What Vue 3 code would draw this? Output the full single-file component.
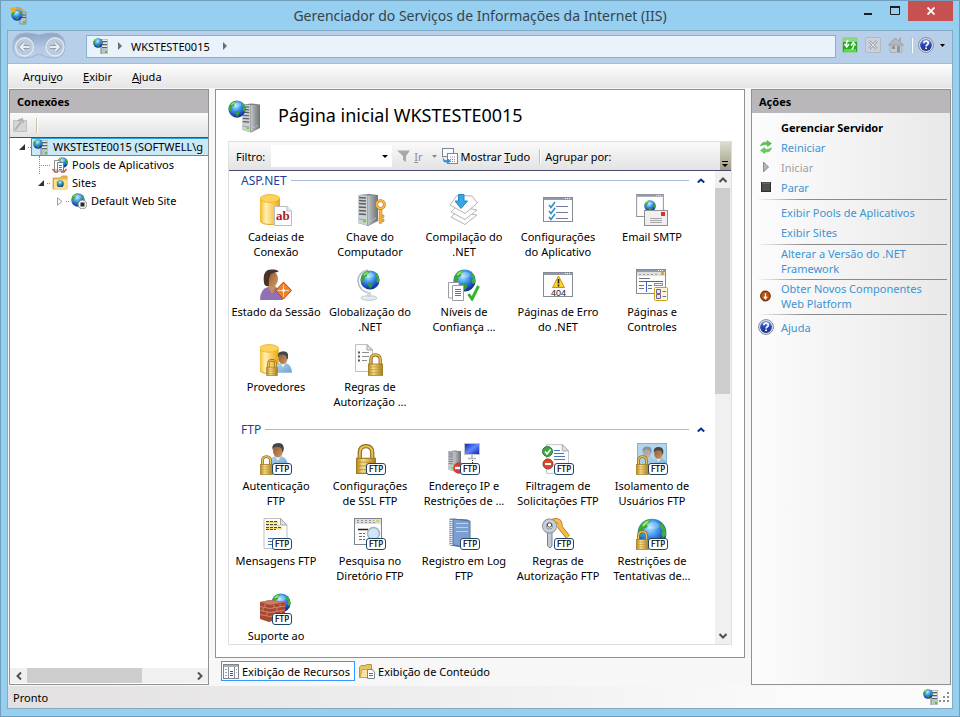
<script setup>
import { ref } from 'vue'

const menus = [
  { before: 'Arqui', key: 'v', after: 'o' },
  { before: '', key: 'E', after: 'xibir' },
  { before: '', key: 'A', after: 'juda' }
]

const tree = [
  { text: 'WKSTESTE0015 (SOFTWELL\\g', icon: 'server-globe', level: 0, state: 'open', selected: true },
  { text: 'Pools de Aplicativos', icon: 'pools', level: 1, state: 'leaf' },
  { text: 'Sites', icon: 'sites', level: 1, state: 'open' },
  { text: 'Default Web Site', icon: 'website', level: 2, state: 'closed' }
]

const groups = [
  {
    name: 'ASP.NET',
    items: [
      { lines: ['Cadeias de', 'Conexão'], icon: 'connection' },
      { lines: ['Chave do', 'Computador'], icon: 'machine-key' },
      { lines: ['Compilação do', '.NET'], icon: 'compile' },
      { lines: ['Configurações', 'do Aplicativo'], icon: 'app-settings' },
      { lines: ['Email SMTP'], icon: 'smtp' },
      { lines: ['Estado da Sessão'], icon: 'session' },
      { lines: ['Globalização do', '.NET'], icon: 'globalization' },
      { lines: ['Níveis de', 'Confiança ...'], icon: 'trust' },
      { lines: ['Páginas de Erro', 'do .NET'], icon: 'error-pages' },
      { lines: ['Páginas e', 'Controles'], icon: 'pages' },
      { lines: ['Provedores'], icon: 'providers' },
      { lines: ['Regras de', 'Autorização ...'], icon: 'rules' }
    ]
  },
  {
    name: 'FTP',
    items: [
      { lines: ['Autenticação', 'FTP'], icon: 'ftp-auth', ftp: true },
      { lines: ['Configurações', 'de SSL FTP'], icon: 'ftp-ssl', ftp: true },
      { lines: ['Endereço IP e', 'Restrições de ...'], icon: 'ftp-ip', ftp: true },
      { lines: ['Filtragem de', 'Solicitações FTP'], icon: 'ftp-filter', ftp: true },
      { lines: ['Isolamento de', 'Usuários FTP'], icon: 'ftp-isolation', ftp: true },
      { lines: ['Mensagens FTP'], icon: 'ftp-messages', ftp: true },
      { lines: ['Pesquisa no', 'Diretório FTP'], icon: 'ftp-browse', ftp: true },
      { lines: ['Registro em Log', 'FTP'], icon: 'ftp-log', ftp: true },
      { lines: ['Regras de', 'Autorização FTP'], icon: 'ftp-rules', ftp: true },
      { lines: ['Restrições de', 'Tentativas de...'], icon: 'ftp-attempts', ftp: true },
      { lines: ['Suporte ao'], icon: 'ftp-firewall', ftp: true }
    ]
  }
]

const actions = [
  {
    items: [
      { lines: ['Reiniciar'], icon: 'restart' },
      { lines: ['Iniciar'], icon: 'play', disabled: true },
      { lines: ['Parar'], icon: 'stop' }
    ]
  },
  { spaced: true, items: [{ lines: ['Exibir Pools de Aplicativos'] }, { lines: ['Exibir Sites'] }] },
  { items: [{ lines: ['Alterar a Versão do .NET', 'Framework'] }] },
  { items: [{ lines: ['Obter Novos Componentes', 'Web Platform'], icon: 'webpi' }] },
  { spaced: true, items: [{ lines: ['Ajuda'], icon: 'help' }] }
]

const filter = ref('')
const view = ref('features')
</script>

<template>
  <svg class="sprite" width="0" height="0" aria-hidden="true">
    <defs>
      <radialGradient id="gSea" cx="0.42" cy="0.32" r="0.72">
        <stop offset="0" stop-color="#b4e8ff" /><stop offset="0.4" stop-color="#4298ee" /><stop offset="0.75" stop-color="#1a4cc0" /><stop offset="1" stop-color="#0b2370" />
      </radialGradient>
      <linearGradient id="gGold" x1="0" x2="1" y1="0" y2="0">
        <stop offset="0" stop-color="#f5b81f" /><stop offset="0.3" stop-color="#fff0b5" /><stop offset="1" stop-color="#eda606" />
      </linearGradient>
      <linearGradient id="gLock" x1="0" x2="1" y1="0" y2="0">
        <stop offset="0" stop-color="#b98a1f" /><stop offset="0.35" stop-color="#f7df8d" /><stop offset="1" stop-color="#a8791a" />
      </linearGradient>
      <linearGradient id="gSteel" x1="0" x2="1" y1="0" y2="0">
        <stop offset="0" stop-color="#c6cacc" /><stop offset="0.4" stop-color="#9da2a5" /><stop offset="1" stop-color="#6d7275" />
      </linearGradient>
      <linearGradient id="gSkin" x1="0" x2="1" y1="0" y2="1">
        <stop offset="0" stop-color="#8a5530" /><stop offset="1" stop-color="#d29b67" />
      </linearGradient>
      <linearGradient id="gShirt" x1="0" x2="1" y1="0" y2="1">
        <stop offset="0" stop-color="#b9d7ef" /><stop offset="1" stop-color="#6da2d0" />
      </linearGradient>
      <linearGradient id="gScreen" x1="0" x2="1" y1="0" y2="1">
        <stop offset="0" stop-color="#0a22a8" /><stop offset="0.5" stop-color="#5f86ff" /><stop offset="1" stop-color="#0a1cb0" />
      </linearGradient>
      <linearGradient id="gHelp" x1="0" x2="0" y1="0" y2="1">
        <stop offset="0" stop-color="#6d8fe8" /><stop offset="0.5" stop-color="#2545b8" /><stop offset="1" stop-color="#1a2f90" />
      </linearGradient>
      <linearGradient id="gFade" x1="0" x2="0" y1="0" y2="1">
        <stop offset="0" stop-color="#8ba5c5" /><stop offset="0.6" stop-color="#b3c8e2" /><stop offset="1" stop-color="#bdd1ea" />
      </linearGradient>

      <!-- shared shapes, each drawn in its own box -->
      <symbol id="globe" viewBox="0 0 24 24">
        <circle cx="12" cy="12" r="11.5" fill="url(#gSea)" />
        <path d="M1.5 8 Q4 2 10 1 L11 3 L8 5 L8.5 7 L5 9 L6 11 L3.5 13 L4 16 Q0 13 1.5 8Z" fill="#3aa832" />
        <path d="M4 5.5 Q7 2 10 2 L8 4.5 L5 7Z" fill="#9be876" />
        <path d="M18.5 4 L20.5 5 Q24 10 23 14 L21 16 L19.5 13 L20.5 10 L18 7Z" fill="#3fb034" />
        <path d="M9 15 L14 15.5 L15 18 L12.5 22.5 L10.5 19Z" fill="#35a02c" />
        <ellipse cx="13" cy="6" rx="5" ry="3" fill="#fff" opacity="0.22" />
      </symbol>
      <symbol id="tower" viewBox="0 0 20 32">
        <path d="M0 1 L11 0 L20 1 L20 27 L10 32 L0 29Z" fill="#7c8184" />
        <path d="M0 1 L9 1.5 L9 31.5 L0 29Z" fill="#ccd0d2" />
        <path d="M9.5 1.5 L20 1.5 L20 26.5 L9.5 31.5Z" fill="url(#gSteel)" />
        <path d="M1 3.5 L8 4 M1 6.5 L8 7 M1 9.5 L8 10 M1 13 L8 13.5 M1 16.5 L8 17 M1 20 L8 20.5" stroke="#5b6063" stroke-width="1.3" />
        <path d="M1 25 L8 26" stroke="#9ba0a3" />
        <path d="M12 27 L18 24" stroke="#d9dcde" stroke-dasharray="1 1" />
        <rect x="5" y="26" width="3" height="2.5" fill="#6fdc2f" />
      </symbol>
      <symbol id="cylinder" viewBox="0 0 20 31">
        <path d="M0 4 V27 Q2 31 10 31 Q18 31 20 27 V4Z" fill="url(#gGold)" />
        <path d="M0.5 27 Q2 30.5 10 30.5 Q18 30.5 19.5 27" fill="none" stroke="#e09a0c" stroke-width="0.8" />
        <ellipse cx="10" cy="4.5" rx="9.7" ry="4" fill="#fbd25a" stroke="#eaa820" stroke-width="0.7" />
      </symbol>
      <symbol id="lock" viewBox="0 0 16 24">
        <path d="M3 13 V7 Q3 1.7 8 1.7 Q13 1.7 13 7 V13" fill="none" stroke="#8c6a1c" stroke-width="3.4" />
        <path d="M3 13 V7 Q3 1.7 8 1.7 Q13 1.7 13 7 V13" fill="none" stroke="#e8c35c" stroke-width="1.6" />
        <rect x="0.5" y="11.5" width="15" height="12" fill="url(#gLock)" stroke="#a67d22" />
        <path d="M1 14.5 H15 M1 17.5 H15 M1 20.5 H15" stroke="#b98f30" stroke-width="0.7" />
      </symbol>
      <symbol id="man" viewBox="0 0 20 24">
        <path d="M1 24 Q0 15 7 13 H13 Q20 15 20 24Z" fill="url(#gShirt)" />
        <path d="M7 13 L10 18 L13 13Z" fill="#eef5fb" />
        <ellipse cx="10" cy="8" rx="5" ry="6.5" fill="url(#gSkin)" />
        <path d="M4.5 7 Q3 0 10.5 0 Q17 0 15.5 8 L14 9 Q14.5 4 10 4 Q6 3 4.5 7Z" fill="#43474a" />
      </symbol>
      <symbol id="page" viewBox="0 0 24 31">
        <path d="M0.5 0.5 H17 L23.5 7 V30.5 H0.5Z" fill="#fcfcfc" stroke="#bfc2c4" />
        <path d="M17 0.5 V7 H23.5Z" fill="#dfe2e4" stroke="#a4a8ab" />
      </symbol>
      <symbol id="frame" viewBox="0 0 30 25">
        <rect x="0.5" y="0.5" width="29" height="24" fill="#fdfdfe" stroke="#868c93" />
        <rect x="1" y="1" width="28" height="2" fill="#8d9bae" />
        <path d="M22 1.5 H28" stroke="#fff" stroke-dasharray="1 1" />
      </symbol>
      <symbol id="key" viewBox="0 0 11 25">
        <path d="M4 9 H7 V24 L5.5 25 L4 24Z M7 16 H9 V18.5 H7 M7 20 H9 V22.5 H7" fill="#f6b23c" stroke="#c07a10" stroke-width="0.5" />
        <circle cx="5.5" cy="5.5" r="3.9" fill="#fff" stroke="#b0700c" stroke-width="2.8" />
        <circle cx="5.5" cy="5.5" r="3.9" fill="none" stroke="#fbb94a" stroke-width="1.8" />
      </symbol>

      <!-- small icons -->
      <symbol id="i-server-globe" viewBox="0 0 16 16">
        <rect x="8" y="1" width="7" height="15" fill="#b9c2c9" />
        <rect x="7.5" y="1" width="1" height="15" fill="#7d868c" />
        <path d="M9 3.5 H14 M9 6.5 H14 M9 9.5 H14" stroke="#596065" />
        <path d="M9 2.5 H14 M9 5.5 H14 M9 8.5 H14" stroke="#f4f6f8" stroke-width="0.8" />
        <rect x="12" y="13" width="2" height="2" fill="#45d11f" />
        <use href="#globe" x="0" y="0" width="10" height="10" />
      </symbol>
      <symbol id="i-pools" viewBox="0 0 16 16">
        <use href="#globe" x="5" y="0" width="11" height="11" />
        <path d="M2.5 3.5 H8 V13 H2.5Z" fill="#fff" stroke="#8b9095" />
        <path d="M5.5 5.5 H11.5 V14 H5.5Z" fill="#fff" stroke="#6f7a85" />
        <path d="M7 8.5 H10 M7 10.5 H10 M7 12.5 H10" stroke="#4a7db5" />
        <path d="M0.5 12 L3 15 H6 M14.5 12 L12 15 H9" fill="none" stroke="#cf4a3e" stroke-width="1.4" />
      </symbol>
      <symbol id="i-sites" viewBox="0 0 16 16">
        <path d="M1 3 H8 L10 1 H15 V14 H1Z" fill="#e6b84f" stroke="#c69a3a" stroke-width="0.8" />
        <rect x="2" y="4.5" width="13" height="9.5" fill="#fbdf8a" />
        <use href="#globe" x="4.5" y="5" width="7.5" height="7.5" />
      </symbol>
      <symbol id="i-website" viewBox="0 0 16 16">
        <use href="#globe" x="0" y="0" width="14" height="14" />
        <circle cx="11.5" cy="11.5" r="4.4" fill="#f4f4f4" stroke="#73777a" stroke-width="0.8" />
        <rect x="9.5" y="9.5" width="4" height="4" fill="#26282a" />
      </symbol>
      <symbol id="i-restart" viewBox="0 0 12 14">
        <path d="M0.5 6 Q2 1 7 2.5 L7 0.5 L11.5 3.5 L7.5 6.5 L7.2 4.8 Q3.5 4 0.5 6Z" fill="#54c548" stroke="#3faa38" stroke-width="0.5" />
        <path d="M11.5 8 Q10 13 5 11.5 L5 13.5 L0.5 10.5 L4.5 7.5 L4.8 9.2 Q8.5 10 11.5 8Z" fill="#62d055" stroke="#3faa38" stroke-width="0.5" />
      </symbol>
      <symbol id="i-play" viewBox="0 0 12 14">
        <path d="M3.5 2 L8.5 7 L3.5 12Z" fill="#b4b4b4" stroke="#8b8b8b" />
      </symbol>
      <symbol id="i-stop" viewBox="0 0 12 14">
        <rect x="1.5" y="2.5" width="9" height="9" fill="#4f4f4f" stroke="#2e2e2e" />
        <path d="M2 3 H10" stroke="#7a7a7a" />
      </symbol>
      <symbol id="i-webpi" viewBox="0 0 13 13">
        <rect width="13" height="13" fill="#fafafa" />
        <circle cx="6" cy="6.5" r="4.5" fill="#b8561a" stroke="#6d2e0c" />
        <path d="M6 4 V8 M4.5 7 L6 9 L7.5 7" fill="none" stroke="#fff" stroke-width="1.1" />
      </symbol>
      <symbol id="i-help" viewBox="0 0 16 16">
        <circle cx="8" cy="8" r="7.4" fill="#e3e5ea" stroke="#85888f" />
        <circle cx="8" cy="8" r="5.9" fill="url(#gHelp)" />
        <path d="M5.8 6.3 Q5.8 4.2 8 4.2 Q10.3 4.2 10.3 6.1 Q10.3 7.2 9 7.9 Q8.1 8.4 8.1 9.4" fill="none" stroke="#fff" stroke-width="1.7" />
        <rect x="7.2" y="10.5" width="1.8" height="1.6" fill="#fff" />
      </symbol>

      <!-- feature icons -->
      <symbol id="i-connection" viewBox="0 0 32 32">
        <use href="#cylinder" x="0" y="0" width="20" height="31" />
        <path d="M14.5 12.5 H27 L31.5 17 V31.5 H14.5Z" fill="#fff" stroke="#b9bbbd" />
        <path d="M27 12.5 V17 H31.5" fill="#e8e8e8" stroke="#b9bbbd" />
        <text x="16" y="26" font-family="Liberation Serif, serif" font-weight="700" font-size="13" fill="#a8201c">ab</text>
      </symbol>
      <symbol id="i-machine-key" viewBox="0 0 32 32">
        <use href="#tower" x="4" y="0" width="20" height="32" />
        <use href="#key" x="21" y="5" width="11" height="25" />
      </symbol>
      <symbol id="i-compile" viewBox="0 0 32 32">
        <g fill="#fdfdfd" stroke="#b5b5b5">
          <path d="M3 23 L9 18 L29 21 L17 30.5Z" /><path d="M3 18 L9 12 L29 16 L17 25.5Z" />
          <path d="M2 11 L9 1.5 L24 2 L29.5 9 L17 19.5Z" />
        </g>
        <path d="M10.5 0.5 H16 V7 H19.5 L13 14.5 L7 7 H10.5Z" fill="#3aa5e4" stroke="#1f86c8" />
      </symbol>
      <symbol id="i-app-settings" viewBox="0 0 32 32">
        <use href="#frame" x="1" y="3" width="30" height="25" />
        <path d="M14 12.5 H26 M14 18.5 H26 M14 24.5 H26" stroke="#6f7e9e" />
        <path d="M7 11 L9 13.5 L13 8 M7 17 L9 19.5 L13 14 M7 23 L9 25.5 L13 20" fill="none" stroke="#2d8fc9" stroke-width="1.6" />
      </symbol>
      <symbol id="i-smtp" viewBox="0 0 32 32">
        <use href="#frame" x="0" y="0" width="28" height="23" />
        <use href="#globe" x="8" y="6" width="12" height="12" />
        <rect x="8.5" y="16.5" width="23" height="15" fill="#efefef" stroke="#909090" />
        <rect x="25" y="18" width="4" height="4" fill="#d8322b" />
        <path d="M14 24.5 H26 M14 26.5 H26 M14 28.5 H26" stroke="#a8a8a8" />
      </symbol>
      <symbol id="i-session" viewBox="0 0 32 32">
        <path d="M0 31 Q0 20 8 18 H15 Q22 19 23 31Z" fill="#8f72b5" />
        <path d="M8 18 L12 25 L16 18 L14 15 H10Z" fill="#c98b57" />
        <ellipse cx="12.5" cy="10" rx="5.5" ry="7.5" fill="url(#gSkin)" />
        <path d="M4 14 Q2 0 12 0.5 Q18 0 18.5 3 Q14 3 11 5 Q8 9 9 17 Q5 18 4 14Z" fill="#4b3226" />
        <path d="M23.5 13 L31.5 21.5 L23.5 30 L15.5 21.5Z" fill="#f0822c" stroke="#b9480c" />
        <path d="M23.5 16 V28 M18 21.5 H29" stroke="#fbd3a8" />
        <path d="M21.5 21.5 L23.5 19.5 L25.5 21.5 L23.5 23.5Z" fill="#fff" />
      </symbol>
      <symbol id="i-globalization" viewBox="0 0 32 32">
        <path d="M14 1 Q4 3 4 12 Q5 22 15 24 V27" fill="none" stroke="#b5bcc2" stroke-width="1.6" />
        <ellipse cx="15" cy="29" rx="8" ry="2.4" fill="#e6eaed" stroke="#b0b7bc" stroke-width="0.7" />
        <path d="M13 23 H17 V28 H13Z" fill="#cfd5da" />
        <use href="#globe" x="6" y="1" width="20" height="20" />
      </symbol>
      <symbol id="i-trust" viewBox="0 0 32 32">
        <use href="#globe" x="5" y="0" width="23" height="23" />
        <path d="M0.5 13.5 H11 V29 H0.5Z" fill="#fff" stroke="#9a9ea2" />
        <path d="M4.5 16.5 H15.5 V31.5 H4.5Z" fill="#fff" stroke="#9a9ea2" />
        <path d="M7 20.5 H13 M7 22.5 H13 M7 24.5 H13 M7 26.5 H13" stroke="#4677b8" />
        <path d="M20.5 25 L24 30 L30.5 17" fill="none" stroke="#35b52c" stroke-width="3" />
      </symbol>
      <symbol id="i-error-pages" viewBox="0 0 32 32">
        <use href="#frame" x="1" y="3" width="30" height="25" />
        <path d="M16.5 7 L22.5 18.5 H10.5Z" fill="#ffd12e" stroke="#c99408" stroke-linejoin="round" />
        <path d="M16.5 10 V14.5 M16.5 15.5 V17.5" stroke="#222" stroke-width="1.6" />
        <text x="16.5" y="27" text-anchor="middle" font-family="Liberation Sans, sans-serif" font-size="9" fill="#1c1c1c">404</text>
      </symbol>
      <symbol id="i-pages" viewBox="0 0 32 32">
        <use href="#frame" x="0" y="0" width="30" height="25" />
        <rect x="1" y="3" width="28" height="4" fill="#dfe0da" />
        <path d="M3 5.5 H22" stroke="#9aa0a5" stroke-dasharray="2 2" />
        <rect x="25" y="3" width="3" height="3" fill="#e9a23b" />
        <path d="M3 9.5 H14 M3 16.5 H8 M3 19.5 H8 M12 16.5 H16 M12 19.5 H16" stroke="#6b7480" />
        <path d="M3 12.5 H9" stroke="#d6342c" /><path d="M9 12.5 H27 M10.5 12 V23" stroke="#3c62c9" />
        <rect x="18.5" y="14.5" width="8" height="2" fill="#fff" stroke="#8a8f95" />
        <rect x="18.5" y="18.5" width="13" height="13" rx="1" fill="#fff7d2" stroke="#c9a516" />
        <path d="M20.5 20.5 H24.5 V24.5 H20.5Z M20.5 25.5 H24.5 V29.5 H20.5Z" fill="#e9e4f2" stroke="#76608f" />
        <path d="M26.5 22.5 H30 M26.5 27.5 H30" stroke="#4677b8" />
      </symbol>
      <symbol id="i-providers" viewBox="0 0 32 32">
        <use href="#cylinder" x="-1" y="0" width="20" height="30" />
        <use href="#man" x="14" y="6" width="18" height="24" />
        <use href="#lock" x="6" y="15" width="12" height="17" />
      </symbol>
      <symbol id="i-rules" viewBox="0 0 32 32">
        <path d="M1.5 0.5 H13 L18.500 6 V27.500 H1.500Z" fill="#fcfcfc" stroke="#bfc2c4" />
        <path d="M13 0.500 V6 H18.500Z" fill="#dfe2e4" stroke="#a4a8ab" />
        <path d="M8 8.500 H15 M8 12.500 H15 M8 16.500 H13" stroke="#8b8f94" />
        <path d="M4 8.500 H6 M4 12.500 H6 M4 16.500 H6" stroke="#55595e" stroke-width="2" />
        <use href="#lock" x="14" y="9" width="15" height="23" />
      </symbol>
      <symbol id="ftp-badge" viewBox="0 0 20 12">
        <rect x="0.5" y="0.5" width="19" height="11" rx="2.5" fill="#fff" stroke="#1e4766" />
        <text x="10" y="9" text-anchor="middle" font-family="DejaVu Sans, sans-serif" font-size="8" fill="#000" stroke="#000" stroke-width="0.2">FTP</text>
      </symbol>
      <symbol id="i-ftp-auth" viewBox="0 0 32 32">
        <use href="#man" x="8" y="0" width="20" height="24" />
        <use href="#lock" x="0" y="12" width="13" height="20" />
      </symbol>
      <symbol id="i-ftp-ssl" viewBox="0 0 32 32">
        <use href="#lock" x="2" y="1" width="20" height="30" />
      </symbol>
      <symbol id="i-ftp-ip" viewBox="0 0 32 32">
        <use href="#tower" x="0" y="7" width="13" height="22" />
        <rect x="16.5" y="0.5" width="15" height="11" fill="url(#gScreen)" stroke="#c3c6c9" />
        <path d="M24 12 V15 M20 15.5 H28" stroke="#b4b8bb" stroke-width="1.6" />
        <path d="M24.5 17 V20" stroke="#222" stroke-dasharray="1 1" />
        <circle cx="11" cy="25" r="5.8" fill="#d63a34" /><path d="M7 25 H15" stroke="#fff" stroke-width="2.4" />
      </symbol>
      <symbol id="i-ftp-filter" viewBox="0 0 32 32">
        <use href="#page" x="4" y="1" width="23" height="30" />
        <path d="M12 7.5 H18 M12 10.5 H22 M12 13.5 H23 M12 16.5 H23" stroke="#3f77c2" />
        <circle cx="5.5" cy="8.5" r="5" fill="#3fa545" stroke="#2a7a30" /><path d="M3 8.5 L5 11 L8.5 6.5" fill="none" stroke="#fff" stroke-width="1.6" />
        <circle cx="6" cy="21" r="5" fill="#d84a2e" stroke="#a8301b" /><path d="M3 21 H9" stroke="#fff" stroke-width="2" />
      </symbol>
      <symbol id="i-ftp-isolation" viewBox="0 0 32 32">
        <rect x="1" y="0" width="30" height="29" fill="#86b2d4" />
        <rect x="2" y="1" width="28" height="26" fill="#b5d6ea" />
        <g opacity="0.45"><use href="#man" x="3" y="3" width="16" height="20" /></g>
        <use href="#man" x="14" y="4" width="17" height="20" />
        <use href="#lock" x="0" y="12" width="13" height="20" />
      </symbol>
      <symbol id="i-ftp-messages" viewBox="0 0 32 32">
        <use href="#page" x="3" y="0" width="25" height="31" />
        <path d="M6 4.5 H18 M6 7.5 H20 M6 10.5 H22" stroke="#f0dc6c" stroke-width="2" />
        <path d="M6 3.5 H18 M6 6.5 H17 M6 9.5 H22 M6 11.5 H16" stroke="#4b4b42" stroke-dasharray="3 1" />
        <path d="M8 20.5 H18 M8 23.5 H12 M8 26.5 H12" stroke="#3f77c2" />
      </symbol>
      <symbol id="i-ftp-browse" viewBox="0 0 32 32">
        <rect x="0.5" y="0.5" width="27" height="26" fill="#fdfdfe" stroke="#7f858d" />
        <rect x="1" y="1" width="26" height="5" fill="#dedfd9" />
        <path d="M3 2.5 H20 M3 4.5 H22" stroke="#8f959b" stroke-dasharray="2 2" /><rect x="22" y="2" width="3" height="2" fill="#e2cf45" />
        <path d="M4 11.5 H14" stroke="#222" stroke-width="1.5" />
        <path d="M5 15.5 H11 M5 18.5 H11 M5 21.5 H11" stroke="#6a7078" stroke-dasharray="3 1" />
        <circle cx="19.5" cy="15.5" r="6" fill="#cfe6f8" stroke="#a3b3c2" stroke-width="1.5" />
      </symbol>
      <symbol id="i-ftp-log" viewBox="0 0 32 32">
        <path d="M2 1 L20 2 V30 L2 27Z" fill="#8fb0da" stroke="#56739f" />
        <path d="M5 1 L22 3 V30 L5 27Z" fill="#7d9fd0" stroke="#56739f" />
        <path d="M8 5.5 H20 M8 9.5 H20 M8 13.5 H20" stroke="#b9d0ee" />
        <path d="M3 2 V28" stroke="#e8eef6" stroke-width="3" stroke-dasharray="1 1" />
      </symbol>
      <symbol id="i-ftp-rules" viewBox="0 0 32 32">
        <path d="M11 3 Q19 1 18 9 L26 19" fill="none" stroke="#b97a14" stroke-width="5" />
        <path d="M11 3 Q19 1 18 9 L26 19" fill="none" stroke="#f7bd4c" stroke-width="3.4" />
        <path d="M5.5 12 H10 V28 L8 30 L5.5 28Z" fill="#c5cad4" stroke="#7a8292" />
        <circle cx="7.5" cy="8" r="5" fill="none" stroke="#747c8c" stroke-width="5" />
        <circle cx="7.5" cy="8" r="5" fill="none" stroke="#c8cdd9" stroke-width="3.6" />
        <circle cx="7.5" cy="7" r="2.2" fill="#fff" stroke="#4b4a3c" />
      </symbol>
      <symbol id="i-ftp-attempts" viewBox="0 0 32 32">
        <use href="#globe" x="1" y="0" width="30" height="30" />
        <use href="#lock" x="0" y="12" width="13" height="20" />
      </symbol>
      <symbol id="i-ftp-firewall" viewBox="0 0 32 32">
        <use href="#globe" x="11" y="0" width="20" height="20" />
        <path d="M0 9 L10 7 L25 9 V24 L9 29 L0 26Z" fill="#a9482f" />
        <path d="M0 9 L10 7 L25 9 L10 12Z" fill="#c97c64" />
        <path d="M0 13.5 L10 15.5 L25 13 M0 17.5 L10 19.5 L25 17 M0 21.5 L10 23.5 L25 21 M5 11 V14 M3 15 V18 M7 19 V22 M14 12 V15 M20 11 V14 M17 15 V18 M14 19 V22 M21 18 V21" fill="none" stroke="#d9a190" stroke-width="0.7" />
      </symbol>
    </defs>
  </svg>

  <div class="window">
    <header class="titlebar">
      <svg class="app-icon" width="18" height="18" viewBox="0 0 18 18" aria-hidden="true">
        <rect x="10" y="5" width="6" height="12" fill="#b9c2c9" stroke="#7d868c" stroke-width="0.8" />
        <path d="M11 8 H16 M11 10.5 H16" stroke="#596065" />
        <rect x="13" y="14" width="2" height="2" fill="#45d11f" />
        <use href="#globe" x="1" y="2" width="12" height="12" />
        <path d="M0 1 L6 0 L5 4 L2 6Z" fill="#f0ad2c" /><path d="M6 1 Q10 0 13 4" fill="none" stroke="#e09a1c" stroke-width="1.5" />
      </svg>
      <h1 class="caption">Gerenciador do Serviços de Informações da Internet (IIS)</h1>
      <div class="caption-buttons">
        <button class="cap" type="button" aria-label="Minimizar"><svg width="10" height="10"><rect x="1" y="7" width="8" height="2" fill="#1d1d1d" /></svg></button>
        <button class="cap" type="button" aria-label="Maximizar"><svg width="10" height="10"><path d="M0.5 1 V8.5 H9.5 V1" fill="none" stroke="#1d1d1d" /><rect x="0" y="0" width="10" height="2" fill="#1d1d1d" /></svg></button>
        <button class="cap close" type="button" aria-label="Fechar"><svg width="8" height="8"><path d="M0.5 0.5 L7.5 7.5 M7.5 0.5 L0.5 7.5" stroke="#fff" stroke-width="1.8" /></svg></button>
      </div>
    </header>

    <div class="client">
      <nav class="navbar">
        <svg class="travel" width="54" height="28" viewBox="0 0 54 28" aria-hidden="true">
          <path d="M14 1 Q20 1 27 3 Q34 1 40 1 Q53 1 53 14 Q53 26 42 26 Q34 26 27 22 Q20 26 12 26 Q1 26 1 14 Q1 1 14 1Z" fill="url(#gFade)" stroke="#9cb4d2" />
          <g fill="#bccada" stroke="#e2eaf3" stroke-width="1.3"><circle cx="12.5" cy="15" r="9" /><circle cx="43" cy="15" r="9" /></g>
          <path d="M17.5 15 H8.5 M12.5 11 L8.5 15 L12.5 19 M38 15 H47 M43 11 L47 15 L43 19" fill="none" stroke="#8d9eb1" stroke-width="3.8" />
          <path d="M17.5 15 H8.5 M12.5 11 L8.5 15 L12.5 19 M38 15 H47 M43 11 L47 15 L43 19" fill="none" stroke="#e6ecf2" stroke-width="2" />
        </svg>
        <div class="address">
          <svg width="16" height="16" aria-hidden="true"><use href="#i-server-globe" /></svg>
          <svg width="6" height="8" aria-hidden="true"><path d="M1 0 L5 4 L1 8Z" fill="#6d6d6d" /></svg>
          <a class="crumb" href="#">WKSTESTE0015</a>
          <svg width="6" height="8" aria-hidden="true"><path d="M1 0 L5 4 L1 8Z" fill="#6d6d6d" /></svg>
        </div>
        <div class="nav-tools">
          <button class="tool" type="button" aria-label="Atualizar"><svg width="16" height="16" viewBox="0 0 16 16">
            <rect x="0.5" y="0.5" width="15" height="15" rx="1.5" fill="#25a822" stroke="#a4c9a6" /><rect x="1" y="1" width="14" height="4" fill="#86d882" /><rect x="2" y="12" width="12" height="3" fill="#4fe23c" />
            <path d="M6.5 3.5 Q4.5 3.5 4.5 8 M2.5 7 L4.8 10 L7 7 M9.5 12 Q11.5 12 11.5 8 M9 8.5 L11.3 5.5 L13.5 8.5" fill="none" stroke="#fff" stroke-width="1.5" /></svg></button>
          <button class="tool" type="button" aria-label="Interromper"><svg width="16" height="16" viewBox="0 0 16 16">
            <rect x="0.5" y="0.5" width="15" height="15" rx="1.5" fill="#ccd2da" stroke="#afb8c3" />
            <path d="M4 4 L12 12 M12 4 L4 12" stroke="#a2a8af" stroke-width="2.6" /><path d="M4 4 L12 12 M12 4 L4 12" stroke="#dfe3e7" /></svg></button>
          <button class="tool" type="button" aria-label="Início"><svg width="16" height="16" viewBox="0 0 16 16">
            <path d="M2 7 H14 V15.5 H2Z" fill="#c5cad0" stroke="#a9afb6" /><path d="M0.5 8 L7 1 L15.5 8Z" fill="#b3b9c0" stroke="#9aa1a9" />
            <rect x="11" y="0.5" width="2" height="4" fill="#a4a9af" /><rect x="4" y="9" width="3" height="3" fill="#8f959c" /><rect x="9" y="9" width="3" height="6" fill="#8f959c" /></svg></button>
          <span class="divider"></span>
          <button class="tool help" type="button" aria-label="Ajuda"><svg width="16" height="16"><use href="#i-help" /></svg><svg width="5" height="3"><path d="M0 0 H5 L2.5 3Z" fill="#000" /></svg></button>
        </div>
      </nav>

      <div class="menubar">
        <button v-for="m in menus" :key="m.key" class="menu" type="button">{{ m.before }}<u>{{ m.key }}</u>{{ m.after }}</button>
      </div>

      <main class="workspace">
        <aside class="panel connections">
          <h2 class="panel-title">Conexões</h2>
          <div class="tree-tools">
            <button class="tool" type="button" aria-label="Conectar"><svg width="14" height="14" viewBox="0 0 14 14">
              <path d="M0.5 2.5 H13.5 V13.5 H0.5Z" fill="#d5d5d5" stroke="#c0c0c0" /><path d="M2 12 L8 4 M5 3 L9 1 L10 5" fill="none" stroke="#b0b0b0" stroke-width="2" /></svg></button>
            <span class="divider"></span>
          </div>
          <ul class="tree">
            <li v-for="n in tree" :key="n.text" class="node" :class="['level-' + n.level, n.state, { selected: n.selected }]">
              <span class="expander">
                <svg v-if="n.state === 'open'" width="6" height="6"><path d="M6 0 V6 H0Z" fill="#333" /></svg>
                <svg v-else-if="n.state === 'closed'" width="6" height="9"><path d="M0.5 0.8 L5 4.5 L0.5 8.2Z" fill="#fff" stroke="#9b9b9b" /></svg>
                <i class="dots"></i>
              </span>
              <span class="node-body"><svg width="16" height="16" aria-hidden="true"><use :href="'#i-' + n.icon" /></svg>{{ n.text }}</span>
            </li>
          </ul>
          <div class="hscroll">
            <button class="arrow" type="button" aria-label="Rolar para a esquerda"><svg width="6" height="8"><path d="M5 0.5 L1.5 4 L5 7.5" fill="none" stroke="#505050" stroke-width="2" /></svg></button>
            <div class="track"><div class="thumb"></div></div>
            <button class="arrow" type="button" aria-label="Rolar para a direita"><svg width="6" height="8"><path d="M1 0.5 L4.5 4 L1 7.5" fill="none" stroke="#505050" stroke-width="2" /></svg></button>
          </div>
        </aside>

        <section class="center">
          <div class="panel home">
            <div class="home-head">
              <svg width="34" height="34" viewBox="0 0 34 34" aria-hidden="true"><use href="#tower" x="14" y="3" width="18" height="30" /><use href="#globe" x="0" y="0" width="18" height="18" /></svg>
              <h2 class="home-title">Página inicial WKSTESTE0015</h2>
            </div>
            <div class="features">
              <div class="filterbar">
                <label class="filter-label" for="filter">Filtro:</label>
                <div class="combo">
                  <select id="filter" v-model="filter"><option value=""></option></select>
                  <svg class="combo-arrow" width="6" height="3"><path d="M0 0 H6 L3 3Z" fill="#000" /></svg>
                </div>
                <button class="bar-btn dim" type="button" disabled>
                  <svg width="14" height="12"><path d="M0 0.5 H13 L9 6 V12 L6 10 V6Z" fill="#a8a8a8" /></svg><span><u>I</u>r</span>
                  <svg class="split" width="5" height="3"><path d="M0 0 H5 L2.5 3Z" fill="#8b8b8b" /></svg>
                </button>
                <button class="bar-btn" type="button">
                  <svg width="16" height="16" viewBox="0 0 16 16"><rect x="0.5" y="0.5" width="11" height="8" fill="#f8fafc" stroke="#7d8894" /><rect x="5.5" y="5.5" width="10" height="10" fill="#fff" stroke="#7d8894" />
                    <path d="M8 9 H14 M8 11.5 H14 M8 13.5 H14" stroke="#7a8bb8" stroke-dasharray="1 1" /><path d="M1 9 Q2 13 5 12 V10 L9 13 L5 16 V14.5 Q0 15 1 9Z" fill="#2f8fd6" /></svg>
                  <span>Mostrar <u>T</u>udo</span>
                </button>
                <span class="divider"></span>
                <span>Agrupar por:</span>
                <button class="overflow" type="button" aria-label="Mais opções"><svg width="7" height="7"><path d="M0 0.5 H6" stroke="#000" /><path d="M0 3 H6 L3 6Z" fill="#000" /></svg></button>
              </div>
              <div class="scroller">
                <div class="content">
                  <section v-for="g in groups" :key="g.name" class="group">
                    <header class="group-head">
                      <h3>{{ g.name }}</h3><span class="rule"></span>
                      <button class="collapse" type="button" :aria-label="'Recolher ' + g.name"><svg width="8" height="5"><path d="M0.8 4.5 L4 1.5 L7.2 4.5" fill="none" stroke="#062f8c" stroke-width="2" /></svg></button>
                    </header>
                    <div class="grid">
                      <a v-for="f in g.items" :key="f.icon" class="feature" href="#">
                        <svg width="32" height="32" viewBox="0 0 32 32" aria-hidden="true">
                          <use :href="'#i-' + f.icon" width="32" height="32" />
                          <use v-if="f.ftp" href="#ftp-badge" x="12" y="20" width="20" height="12" />
                        </svg>
                        <span class="feature-text"><span v-for="l in f.lines" :key="l">{{ l }}</span></span>
                      </a>
                    </div>
                  </section>
                </div>
                <div class="vscroll">
                  <button class="arrow" type="button" aria-label="Rolar para cima"><svg width="8" height="6"><path d="M0.5 5 L4 1.5 L7.5 5" fill="none" stroke="#505050" stroke-width="2" /></svg></button>
                  <div class="track"><div class="thumb"></div></div>
                  <button class="arrow" type="button" aria-label="Rolar para baixo"><svg width="8" height="6"><path d="M0.5 1 L4 4.5 L7.5 1" fill="none" stroke="#505050" stroke-width="2" /></svg></button>
                </div>
              </div>
            </div>
          </div>
          <div class="views">
            <button class="view" :class="{ on: view === 'features' }" type="button" @click="view = 'features'">
              <svg width="16" height="15" viewBox="0 0 16 15"><rect x="0.5" y="0.5" width="15" height="14" fill="#fff" stroke="#7f858d" /><rect x="1" y="1" width="14" height="2" fill="#a9aeb8" /><path d="M5.5 3 V15 M11.5 3 V15" stroke="#8b8f96" />
                <path d="M2 5.5 H4 M2 8.5 H4 M2 11.5 H4 M13 5.5 H14 M13 8.5 H14" stroke="#8fa4c8" /><path d="M7 7.5 H10 M7 9.5 H10 M7 11.5 H10" stroke="#555" /></svg>
              Exibição de Recursos
            </button>
            <button class="view" :class="{ on: view === 'content' }" type="button" @click="view = 'content'">
              <svg width="16" height="15" viewBox="0 0 16 15"><path d="M0.5 3.5 L2 1.5 H6 L8 0.5 H12.5 V13.5 H0.5Z" fill="#e9c36a" stroke="#b99244" /><path d="M1 13.5 L3 5.5 H14 L12 13.5Z" fill="#fbe3a4" stroke="#c9a352" />
                <path d="M8.5 5.5 H13 L15.5 8 V14.5 H8.5Z" fill="#fff" stroke="#7d8894" /><path d="M10 9.5 H14 M10 11.5 H14" stroke="#3f77c2" /></svg>
              Exibição de Conteúdo
            </button>
          </div>
        </section>

        <aside class="panel actions">
          <h2 class="panel-title">Ações</h2>
          <h3 class="actions-head">Gerenciar Servidor</h3>
          <ul v-for="(s, i) in actions" :key="i" class="action-list" :class="{ spaced: s.spaced }">
            <li v-for="a in s.items" :key="a.lines[0]" class="action">
              <span class="action-icon"><svg v-if="a.icon" :class="{ large: a.icon === 'help' }" width="14" height="14" aria-hidden="true"><use :href="'#i-' + a.icon" /></svg></span>
              <a href="#" :class="{ disabled: a.disabled }"><span v-for="l in a.lines" :key="l">{{ l }}</span></a>
            </li>
          </ul>
        </aside>
      </main>

      <footer class="statusbar">
        <span>Pronto</span>
        <svg class="status-icon" width="16" height="16" aria-hidden="true"><use href="#i-server-globe" /></svg>
        <svg width="11" height="11" aria-hidden="true"><path d="M8 0 H10 V2 H8Z M4 4 H6 V6 H4Z M8 4 H10 V6 H8Z M0 8 H2 V10 H0Z M4 8 H6 V10 H4Z M8 8 H10 V10 H8Z" fill="#8f8f8f" /></svg>
      </footer>
    </div>
  </div>
</template>

<style>
body { margin: 0; }
</style>

<style scoped>
.sprite { position: absolute; }
.window {
  box-sizing: border-box;
  height: 100vh;
  display: flex;
  flex-direction: column;
  padding: 0 6px 7px;
  border: 1px solid #6f9fbb;
  background: #96cff0;
  color: #000;
  font: 11px/15px "Noto Sans", "Open Sans", sans-serif;
  overflow: hidden;
}
svg { display: block; flex: none; }
h1, h2, h3, ul { margin: 0; padding: 0; font: inherit; list-style: none; }
button { margin: 0; padding: 0; border: 0; background: none; color: inherit; font: inherit; white-space: nowrap; }
a { color: inherit; text-decoration: none; }

.titlebar { display: grid; grid-template-columns: 136px 1fr 136px; height: 29px; }
.app-icon { margin: 6px 0 0 3px; }
.caption { font-size: 14px; line-height: 29px; text-align: center; color: #36434d; white-space: nowrap; }
.caption-buttons { display: flex; height: 20px; justify-content: flex-end; }
.cap { width: 27px; display: flex; align-items: center; justify-content: center; }
.close { width: 45px; background: #c75050; }

.client { flex: 1; min-height: 0; display: flex; flex-direction: column; border: 1px solid #82abc5; background: #f7f7f7; }

.navbar { display: flex; align-items: center; height: 30px; padding: 0 4px 2px; background: #b8cfea; border-bottom: 1px solid #a5bbd6; }
.address { flex: 1; display: flex; align-items: center; gap: 8px; height: 21px; margin: 0 6px 0 20px; padding-left: 6px; border: 1px solid #86b0cf; background: #eaf2fb; }
.crumb { margin: 0 4px 0 0; }
.nav-tools { display: flex; align-items: center; gap: 7px; padding-bottom: 2px; }
.help { display: flex; align-items: center; gap: 6px; margin: 0 3px 0 -2px; }
.divider { width: 1px; height: 15px; background: #c5c2a8; border-right: 1px solid #fff; }

.menubar { display: flex; gap: 20px; height: 24px; padding-left: 15px; background: linear-gradient(#fdfdfd, #e6e5e6); }

.workspace { flex: 1; min-height: 0; display: flex; gap: 6px; padding: 1px; }
.panel { display: flex; flex-direction: column; box-sizing: border-box; border: 1px solid #919191; background: #fff; min-height: 0; overflow: hidden; }
.panel-title { flex: none; height: 23px; line-height: 23px; padding-left: 7px; font-weight: 700; background: #bab7ba; }
.connections, .actions { width: 200px; flex: none; }

.tree-tools { display: flex; align-items: center; gap: 9px; height: 24px; padding-left: 3px; background: linear-gradient(#fafafa, #e4e3e4); border-bottom: 1px solid #4a4a70; }
.tree { flex: 1; }
.node { display: flex; height: 18px; }
.level-1 { padding-left: 19px; }
.level-2 { padding-left: 38px; }
.expander { position: relative; flex: none; width: 21px; display: flex; align-items: center; padding-left: 9px; box-sizing: border-box; }
.dots { position: absolute; right: 0; top: 9px; width: 3px; border-top: 1px dotted #888; }
.leaf .dots { width: 9px; }
.leaf .expander::before { content: ""; position: absolute; right: 10px; top: 0; height: 18px; border-left: 1px dotted #888; }
.node-body { flex: 1; display: flex; align-items: center; gap: 4px; padding-left: 2px; box-sizing: border-box; line-height: 16px; white-space: nowrap; }
.selected .node-body { padding-left: 1px; background: #cbe8f6; border: 1px solid #26a0da; border-right: 0; }

.arrow { flex: none; width: 17px; height: 17px; display: flex; align-items: center; justify-content: center; }
.hscroll { display: flex; align-items: center; height: 15px; margin-bottom: 1px; background: #f0f0f0; }
.hscroll .track { flex: 1; height: 15px; }
.hscroll .thumb { width: 70%; height: 100%; background: #cdcdcd; }
.vscroll { width: 16px; flex: none; display: flex; flex-direction: column; background: #f0f0f0; }
.vscroll .arrow { width: 16px; }
.vscroll .track { flex: 1; padding: 0 1px 0 0; }
.vscroll .thumb { height: 47%; background: #cdcdcd; }

.center { flex: 1; min-width: 0; display: flex; flex-direction: column; gap: 3px; }
.home { flex: 1; padding: 10px 12px 12px; }
.home-head { display: flex; align-items: center; gap: 16px; height: 34px; margin-bottom: 7px; }
.home-title { font-size: 18px; line-height: 30px; white-space: nowrap; align-self: flex-start; }
.features { flex: 1; min-height: 0; display: flex; flex-direction: column; border: 1px solid #dfdfdf; }
.filterbar { display: flex; align-items: center; flex: none; height: 28px; padding-left: 7px; background: linear-gradient(#fafafa, #e4e3e4); border-bottom: 1px solid #4a4a70; white-space: nowrap; }
.combo { position: relative; width: 121px; height: 22px; margin: 0 5px 0 6px; }
.combo select { width: 100%; height: 100%; border: 0; appearance: none; background: #fff; }
.combo-arrow { position: absolute; right: 4px; top: 10px; pointer-events: none; }
.bar-btn { display: flex; align-items: center; gap: 3px; margin-right: 5px; }
.dim { color: #8b8b8b; }
.split { margin-left: 6px; }
.filterbar .divider { margin: 0 4px; }
.overflow { align-self: stretch; width: 11px; margin-left: auto; display: flex; align-items: flex-end; justify-content: center; padding-bottom: 2px; background: linear-gradient(#dcdbd0, #a09f84); }

.scroller { flex: 1; min-height: 0; display: flex; }
.content { flex: 1; min-width: 0; overflow: hidden; }
.group { display: flex; flex-direction: column; gap: 4px; }
.group + .group { margin-top: 1px; }
.group-head { display: flex; align-items: center; height: 19px; padding: 0 10px 0 12px; }
.group-head h3 { color: #1c3f9c; font-size: 12px; }
.rule { flex: 1; height: 1px; margin: 0 8px 0 4px; background: #a9b9dc; }
.collapse { display: flex; }
.grid { display: grid; grid-template-columns: repeat(auto-fill, 94px); grid-auto-rows: 75px; }
.feature { display: flex; flex-direction: column; align-items: center; gap: 3px; }
.feature-text { display: flex; flex-direction: column; align-items: center; white-space: nowrap; }

.views { display: flex; gap: 2px; height: 24px; padding-left: 6px; align-items: flex-start; }
.view { display: flex; align-items: center; gap: 3px; height: 20px; padding: 0 4px 0 1px; border: 1px solid transparent; }
.view.on { border-color: #3399ff; background: #fff; }

.actions { background: linear-gradient(90deg, #fcfcfc, #e9e9e9); }
.actions-head { margin: 5px 0 0 29px; line-height: 20px; font-weight: 700; }
.action-list { margin: 0 3px 0 5px; }
.action-list:first-of-type { padding-bottom: 1px; }
.action-list + .action-list { border-top: 1px solid transparent; border-image: linear-gradient(90deg, transparent, #8a8a8a 25%) 1; }
.action-list.spaced { padding: 3px 0 1px; }
.action { display: flex; align-items: center; box-sizing: border-box; min-height: 20px; padding: 1px 0 3px; color: #3c94d4; }
.action-icon { width: 17px; margin-right: 7px; display: flex; flex: none; justify-content: center; }
.action-icon .large { width: 16px; height: 16px; }
.action a { display: flex; flex-direction: column; white-space: nowrap; }
.action .disabled { color: #a0a0a0; }

.statusbar { display: flex; align-items: center; height: 22px; padding: 0 2px 0 5px; background: linear-gradient(90deg, #e2e0e1, #fbfbfb 85%); }
.status-icon { margin-left: auto; }
</style>
